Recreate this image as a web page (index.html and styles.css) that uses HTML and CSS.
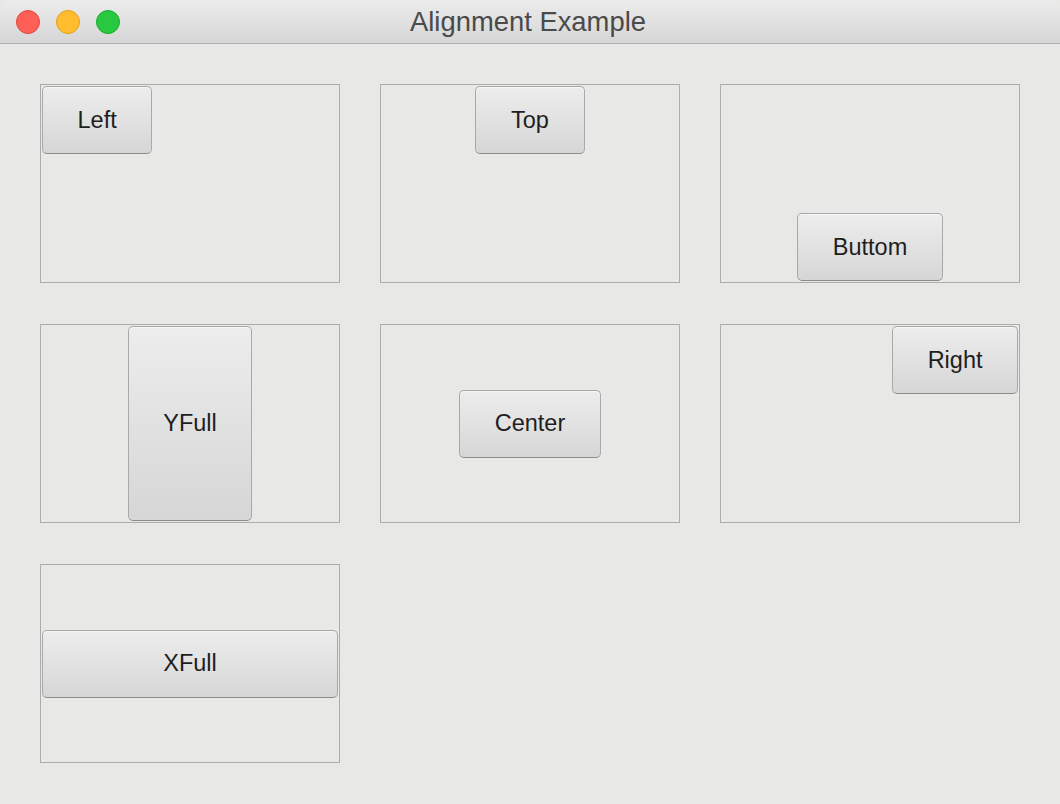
FILE: index.html
```html
<!DOCTYPE html>
<html>
<head>
<meta charset="utf-8">
<link rel="stylesheet" href="styles.css">
</head>
<body>
<div class="window">
  <div class="titlebar">
    <div class="lights">
      <span class="light red"></span>
      <span class="light yellow"></span>
      <span class="light green"></span>
    </div>
    <div class="title">Alignment Example</div>
  </div>
  <div class="content">
    <div class="box left"><button class="btn">Left</button></div>
    <div class="box top"><button class="btn">Top</button></div>
    <div class="box bottom"><button class="btn">Buttom</button></div>
    <div class="box yfull"><button class="btn">YFull</button></div>
    <div class="box center"><button class="btn">Center</button></div>
    <div class="box right"><button class="btn">Right</button></div>
    <div class="box xfull"><button class="btn">XFull</button></div>
  </div>
</div>
</body>
</html>
```

FILE: styles.css
```css
html, body {
  margin: 0;
  padding: 0;
}
body {
  width: 1060px;
  height: 804px;
  overflow: hidden;
  background: #e8e8e6;
  font-family: "Liberation Sans", Arial, Helvetica, sans-serif;
}
.window {
  width: 1060px;
  height: 804px;
  background: #e8e8e6;
  border-radius: 10px 10px 0 0;
  overflow: hidden;
}
.titlebar {
  position: relative;
  height: 43px;
  background: linear-gradient(#ececec, #d6d6d6);
  border-bottom: 1px solid #afafaf;
  display: flex;
  align-items: center;
  justify-content: center;
}
.lights {
  position: absolute;
  left: 16px;
  top: 10px;
  display: flex;
  gap: 16px;
}
.light {
  width: 24px;
  height: 24px;
  border-radius: 50%;
  box-sizing: border-box;
}
.red { background: #fe5f57; border: 1px solid #e2463f; }
.yellow { background: #febc2e; border: 1px solid #e1a116; }
.green { background: #28c840; border: 1px solid #1aab29; }
.title {
  font-size: 27.4px;
  color: #4a4a4a;
  margin-top: 1px;
  margin-left: -4px;
}
.content {
  padding: 40px 0 0 40px;
  display: grid;
  grid-template-columns: repeat(3, 300px);
  grid-template-rows: repeat(3, 199px);
  column-gap: 40px;
  row-gap: 41px;
}
.box {
  box-sizing: border-box;
  border: 1px solid #acacaa;
  padding: 1px;
  display: flex;
}
.btn {
  font-family: "Liberation Sans", Arial, Helvetica, sans-serif;
  font-size: 23.5px;
  color: #1e1e1e;
  height: 68px;
  min-width: 110px;
  padding: 0 34.5px;
  box-sizing: border-box;
  border: 1px solid #a9a9a9;
  border-bottom-color: #8c8c8c;
  border-radius: 5px;
  background: linear-gradient(#ededed, #d6d6d6);
  box-shadow: inset 0 1px 0 #f6f6f6;
}
.left { align-items: flex-start; justify-content: flex-start; }
.top { align-items: flex-start; justify-content: center; }
.bottom { align-items: flex-end; justify-content: center; }
.yfull { align-items: stretch; justify-content: center; }
.yfull .btn { height: auto; }
.center { align-items: center; justify-content: center; }
.right { align-items: flex-start; justify-content: flex-end; }
.xfull { align-items: center; }
.xfull .btn { flex: 1; }
```
